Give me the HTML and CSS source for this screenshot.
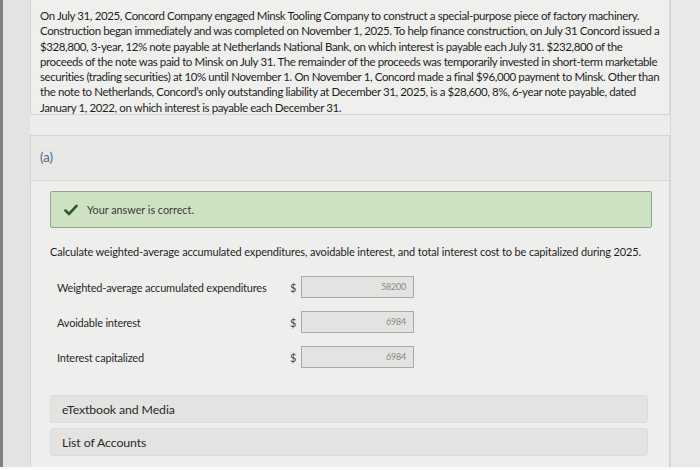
FILE: index.html
```html
<!DOCTYPE html>
<html>
<head>
<meta charset="utf-8">
<link rel="stylesheet" href="styles.css">
</head>
<body>
<div class="screen">
  <div class="edge"></div>
  <div class="gutter"></div>
  <div class="main">
    <div class="question">
      <p>On July 31, 2025, Concord Company engaged Minsk Tooling Company to construct a special-purpose piece of factory machinery.<br>
      Construction began immediately and was completed on November 1, 2025. To help finance construction, on July 31 Concord issued a<br>
      $328,800, 3-year, 12% note payable at Netherlands National Bank, on which interest is payable each July 31. $232,800 of the<br>
      proceeds of the note was paid to Minsk on July 31. The remainder of the proceeds was temporarily invested in short-term marketable<br>
      securities (trading securities) at 10% until November 1. On November 1, Concord made a final $96,000 payment to Minsk. Other than<br>
      the note to Netherlands, Concord’s only outstanding liability at December 31, 2025, is a $28,600, 8%, 6-year note payable, dated<br>
      January 1, 2022, on which interest is payable each December 31.</p>
    </div>
    <div class="part">
      <div class="part-head">(a)</div>
      <div class="part-body">
        <div class="correct">
          <svg class="check" width="14" height="12" viewBox="0 0 14 12"><path d="M1.5 6.5 L5 10 L12.5 1.8" fill="none" stroke="#2f5a2c" stroke-width="2.6" stroke-linecap="round" stroke-linejoin="round"/></svg>
          <span>Your answer is correct.</span>
        </div>
        <p class="prompt">Calculate weighted-average accumulated expenditures, avoidable interest, and total interest cost to be capitalized during 2025.</p>
        <div class="rows">
          <div class="row"><span class="label">Weighted-average accumulated expenditures</span><span class="cur">$</span><span class="input">58200</span></div>
          <div class="row"><span class="label">Avoidable interest</span><span class="cur">$</span><span class="input">6984</span></div>
          <div class="row"><span class="label">Interest capitalized</span><span class="cur">$</span><span class="input">6984</span></div>
        </div>
        <div class="links">
          <div class="link">eTextbook and Media</div>
          <div class="link">List of Accounts</div>
        </div>
      </div>
    </div>
  </div>
  <div class="right"></div>
</div>
<div class="bottom"></div>
</body>
</html>
```

FILE: styles.css
```css
html, body {
  margin: 0;
  padding: 0;
  width: 700px;
  height: 470px;
  overflow: hidden;
  background: #e6e6e4;
  font-family: Lato, "Open Sans", sans-serif;
  color: #2a2a2a;
}
.screen {
  display: flex;
  height: 467px;
}
.edge {
  width: 3px;
  background: #7f7f7f;
}
.gutter {
  width: 27px;
  background: #e3e3e1;
}
.main {
  width: 640px;
  background: #ececea;
  display: flex;
  flex-direction: column;
  gap: 20px;
}
.right {
  flex: 1;
  background: #e9e9e7;
  border-left: 1px solid #d8d8d6;
}
.bottom {
  height: 3px;
  background: #fafafa;
}
.question {
  height: 115px;
  box-sizing: border-box;
  border-left: 1px solid #d3d3d1;
  border-right: 1px solid #d3d3d1;
  border-bottom: 1px solid #d3d3d1;
  background: #efefed;
  padding: 8px 0 0 9px;
}
.question p {
  margin: 0;
  font-size: 11.5px;
  line-height: 15.3px;
  letter-spacing: -0.4px;
  white-space: nowrap;
  color: #1f1f1f;
}
.part {
  flex: 1;
  border-left: 1px solid #d3d3d1;
  border-right: 1px solid #d3d3d1;
  display: flex;
  flex-direction: column;
}
.part-head {
  height: 46px;
  box-sizing: border-box;
  border-top: 1px solid #d6d6d4;
  border-bottom: 1px solid #d6d6d4;
  background: #e8e8e6;
  padding: 13px 0 0 9px;
  font-size: 13px;
  color: #4a6690;
}
.part-body {
  flex: 1;
  background: #eeeeec;
  padding: 10px 19px 0 19px;
}
.correct {
  height: 37px;
  box-sizing: border-box;
  width: 602px;
  border: 1px solid #8fa889;
  border-radius: 2px;
  background: #cde2c3;
  display: flex;
  align-items: center;
  gap: 9px;
  padding-left: 13px;
  font-size: 10.8px;
  color: #3a3a3a;
}
.check { display: block; }
.prompt {
  margin: 17px 0 0 0;
  font-size: 11px;
  letter-spacing: -0.15px;
  white-space: nowrap;
  color: #1f1f1f;
}
.rows {
  margin-top: 18px;
  display: flex;
  flex-direction: column;
  gap: 13px;
  padding-left: 7px;
}
.row {
  display: flex;
  align-items: center;
  height: 22px;
  font-size: 11px;
  letter-spacing: -0.2px;
}
.label {
  width: 233px;
  color: #2a2a2a;
}
.cur {
  width: 11px;
  color: #444;
}
.input {
  width: 113px;
  height: 22px;
  box-sizing: border-box;
  border: 1px solid #a9a9a7;
  background: #e3e3e1;
  color: #8a8a88;
  font-size: 9px;
  text-align: right;
  padding-right: 7px;
  line-height: 20px;
}
.links {
  margin-top: 27px;
  display: flex;
  flex-direction: column;
  gap: 5px;
}
.link {
  width: 598px;
  height: 28px;
  box-sizing: border-box;
  border: 1px solid #dcdcda;
  border-radius: 3px;
  background: #e3e3e1;
  padding-left: 11px;
  display: flex;
  align-items: center;
  font-size: 12.3px;
  letter-spacing: -0.1px;
  color: #2a2a2a;
}
```
